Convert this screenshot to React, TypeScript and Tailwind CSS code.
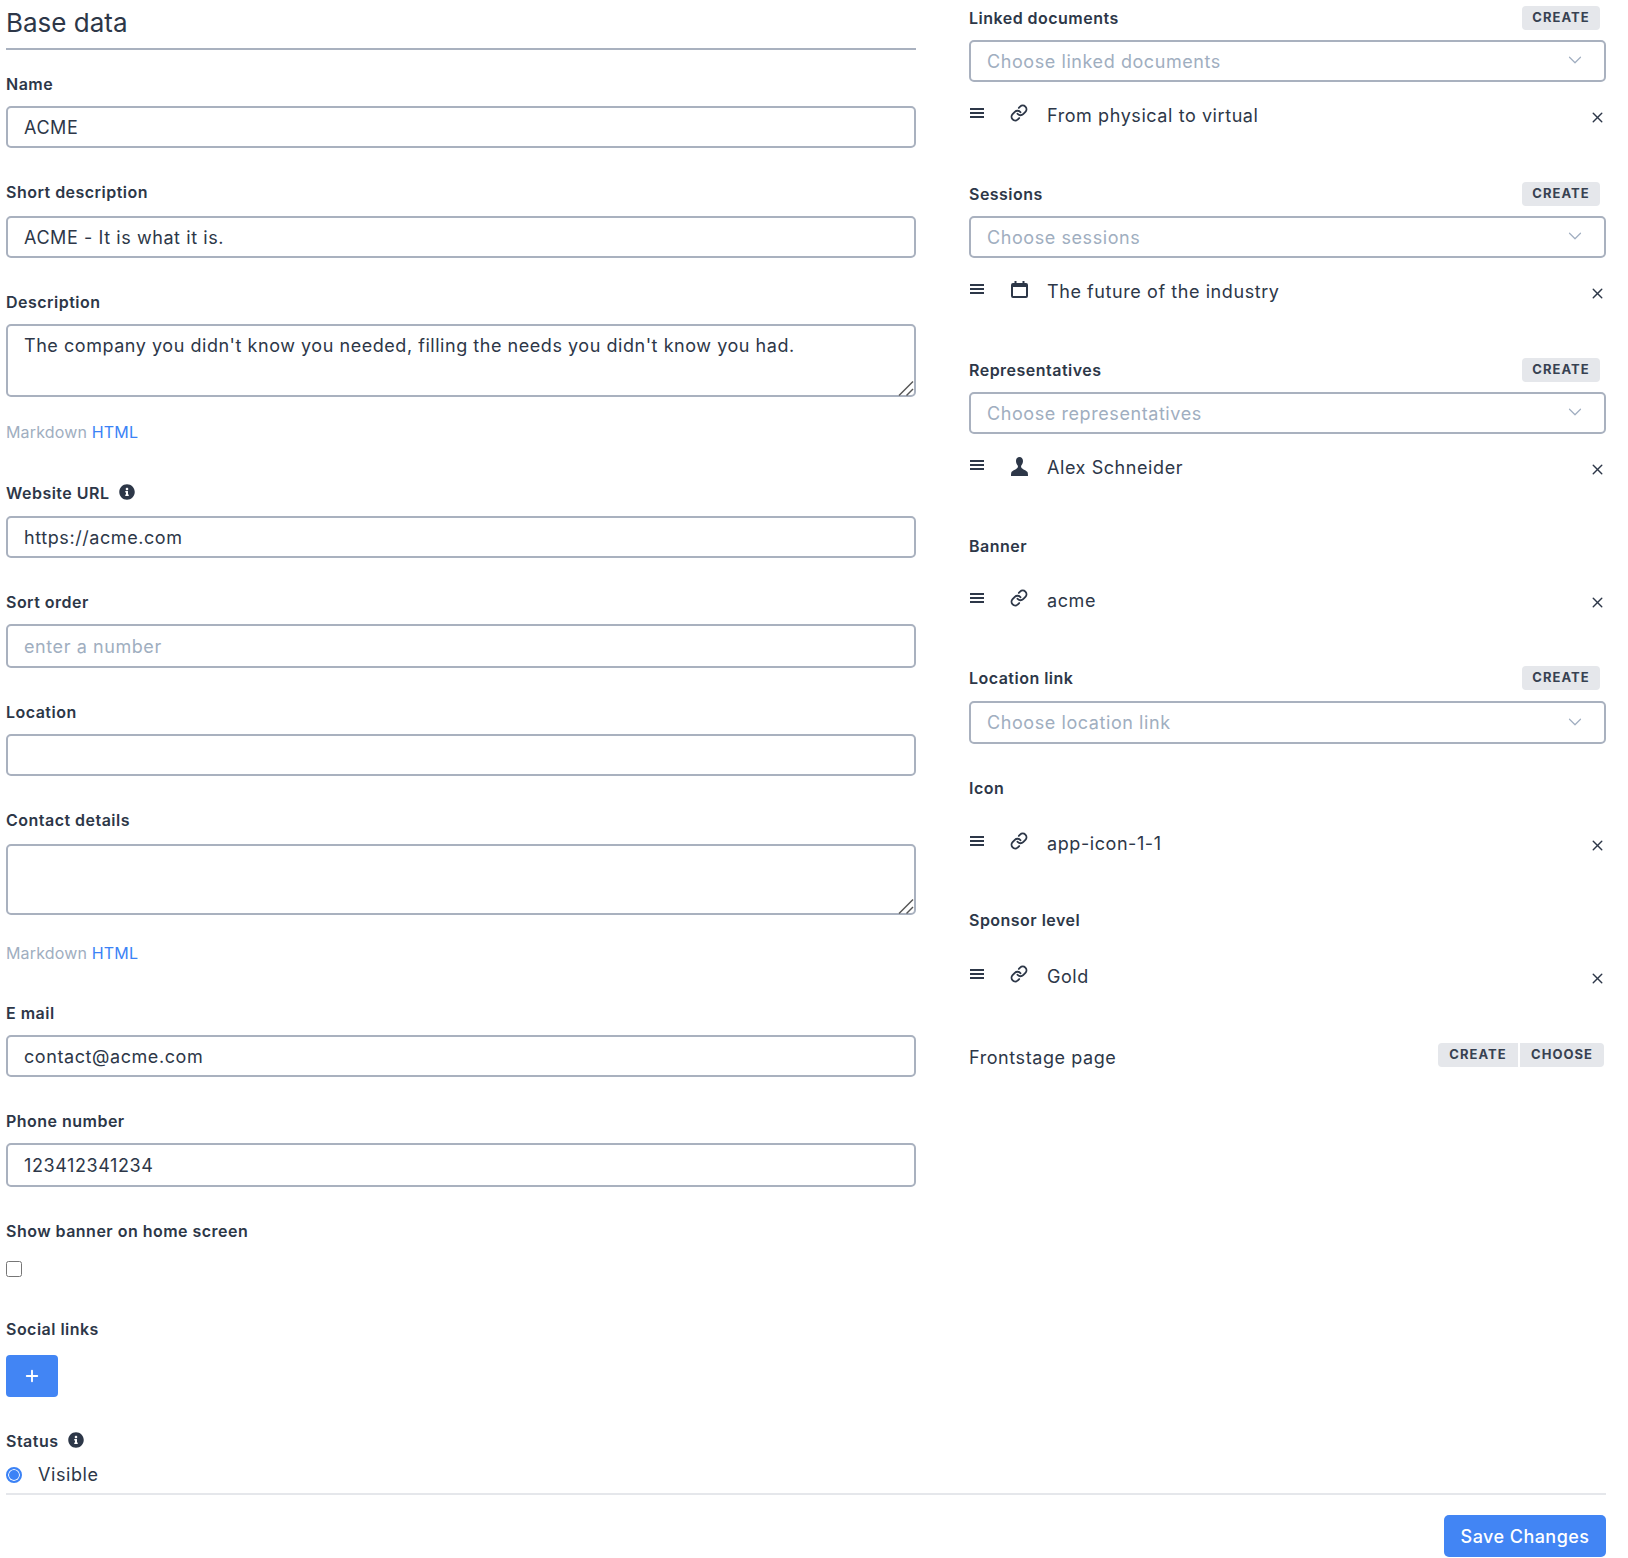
import { ChevronDown, Link as LinkIcon, X, Plus } from "lucide-react";
import { FaInfoCircle } from "react-icons/fa";
import type { ReactNode } from "react";

const inputClass =
  "block w-full h-[42px] rounded-[5px] border-2 border-[#a9b1bf] bg-white px-[16px] text-[18px] tracking-[0.032em] text-[#2d3748] placeholder:text-[#a0aec0] outline-none";

const areaClass =
  "block w-full resize-none rounded-[5px] border-2 border-[#a9b1bf] bg-white px-[16px] py-[6px] text-[18px] leading-[28px] tracking-[0.03em] text-[#2d3748] outline-none";

const Label = ({ children, info }: { children: ReactNode; info?: boolean }) => (
  <div className="flex h-[24px] items-center gap-[10px] text-[16px] font-semibold tracking-[0.03em] text-[#2d3748]">
    <span>{children}</span>
    {info && <FaInfoCircle className="h-[16px] w-[16px] -translate-y-px" />}
  </div>
);

const Field = ({
  label,
  info,
  className,
  children,
}: {
  label: string;
  info?: boolean;
  className?: string;
  children: ReactNode;
}) => (
  <div className={className}>
    <Label info={info}>{label}</Label>
    {children}
  </div>
);

const Area = ({ className, value }: { className: string; value?: string }) => (
  <div className="relative">
    <textarea className={`${areaClass} ${className}`} defaultValue={value} />
    <svg viewBox="0 0 16 16" className="absolute bottom-[1px] right-[2px] h-[16px] w-[16px]" stroke="#555" strokeWidth="1.4" fill="none">
      <path d="M1 15.5 15 1.5" />
      <path d="M8.5 15.5 15 9" />
    </svg>
  </div>
);

const SmallButton = ({ children, className = "rounded-[4px]" }: { children: ReactNode; className?: string }) => (
  <button className={`flex h-[24px] items-center justify-center bg-[#e5e7eb] text-[13px] font-bold tracking-[0.08em] text-[#374151] ${className}`}>
    {children}
  </button>
);

const Markdown = ({ className }: { className: string }) => (
  <div className={`text-[16px] leading-[24px] tracking-[0.01em] text-[#a0aec0] ${className}`}>
    Markdown <span className="text-[#3b82f6]">HTML</span>
  </div>
);

const Burger = () => (
  <svg viewBox="0 0 14 10" className="ml-[1px] h-[10px] w-[14px]" fill="#2d3748">
    <rect y="0" width="14" height="2" />
    <rect y="4" width="14" height="2" />
    <rect y="8" width="14" height="2" />
  </svg>
);

const CalendarIcon = () => (
  <svg viewBox="0 0 17 17" className="ml-[1px] h-[17px] w-[17px]">
    <path
      fillRule="evenodd"
      fill="#2d3748"
      d="M2 2h1.5v-2h2v2h6v-2h2v2H15a2 2 0 0 1 2 2v11a2 2 0 0 1-2 2H2a2 2 0 0 1-2-2V4a2 2 0 0 1 2-2zM2 6v9h13V6z"
    />
  </svg>
);

const UserIcon = () => (
  <svg viewBox="0 0 17 19" className="ml-[1px] h-[19px] w-[17px] translate-y-[1px]" fill="#2d3748">
    <path d="M8.5 0C6.3 0 5 1.7 5 4c0 1.7.7 3.4 1.7 4.4.3.4.3 1.5 0 2.1C5.7 12.4 1 13.5.3 15.5 0 16.5 0 18 0 19h17c0-1-.1-2.5-.3-3.5-.7-2-5.4-3.1-6.4-5-.3-.6-.3-1.7 0-2.1C11.3 7.4 12 5.7 12 4c0-2.3-1.3-4-3.5-4z" />
  </svg>
);

const Row = ({ icon, text, className }: { icon: ReactNode; text: string; className: string }) => (
  <div className={`flex h-[24px] items-center text-[18px] tracking-[0.032em] text-[#2d3748] ${className}`}>
    <span className="flex w-[41px] -translate-y-[2px] items-center">
      <Burger />
    </span>
    <span className="flex w-[37px] -translate-y-[2px] items-center text-[#2d3748]">{icon}</span>
    <span className="flex-1">{text}</span>
    <X className="h-[17px] w-[17px] translate-y-[2px]" strokeWidth={2} />
  </div>
);

const Select = ({ text, className = "" }: { text: string; className?: string }) => (
  <div className={`flex items-center justify-between rounded-[5px] border-2 border-[#a9b1bf] bg-white pl-[16px] pr-[18px] text-[18px] tracking-[0.032em] text-[#a0aec0] ${className}`}>
    <span>{text}</span>
    <ChevronDown className="h-[22px] w-[22px] -translate-y-[1px] text-[#a0aec0]" strokeWidth={1.3} />
  </div>
);

const Header = ({ label, create = true, className = "" }: { label: string; create?: boolean; className?: string }) => (
  <div className={`flex h-[24px] items-center justify-between pr-[6px] ${className}`}>
    <Label>{label}</Label>
    {create && <SmallButton className="w-[78px] rounded-[4px]">CREATE</SmallButton>}
  </div>
);

const link = <LinkIcon className="h-[18px] w-[18px]" strokeWidth={2.5} />;

export default function App() {
  return (
    <div className="h-[1558px] overflow-hidden bg-white pl-[6px] pr-[22px] font-['Inter',sans-serif]">
      <div className="grid grid-cols-[910px_637px] gap-x-[53px]">
        <div>
          <h2 className="mb-[22px] h-[50px] border-b-2 border-[#a9b1bf] text-[26px] leading-[46px] text-[#2d3748]">
            Base data
          </h2>
          <Field label="Name" className="mb-[32px]">
            <input className={`${inputClass} mt-[10px]`} defaultValue="ACME" />
          </Field>
          <Field label="Short description" className="mb-[32px]">
            <input className={`${inputClass} mt-[12px]`} defaultValue="ACME - It is what it is." />
          </Field>
          <Field label="Description">
            <Area
              className="mt-[10px] h-[73px]"
              value="The company you didn't know you needed, filling the needs you didn't know you had."
            />
          </Field>
          <Markdown className="mb-[37px] mt-[23px]" />
          <Field label="Website URL" info className="mb-[32px]">
            <input className={`${inputClass} mt-[11px]`} defaultValue="https://acme.com" />
          </Field>
          <Field label="Sort order" className="mb-[32px]">
            <input className={`${inputClass} mt-[10px] h-[44px]`} placeholder="enter a number" />
          </Field>
          <Field label="Location" className="mb-[32px]">
            <input className={`${inputClass} mt-[10px]`} />
          </Field>
          <Field label="Contact details">
            <Area className="mt-[12px] h-[71px]" />
          </Field>
          <Markdown className="mb-[36px] mt-[26px]" />
          <Field label="E mail" className="mb-[32px]">
            <input className={`${inputClass} mt-[10px]`} defaultValue="contact@acme.com" />
          </Field>
          <Field label="Phone number" className="mb-[32px]">
            <input className={`${inputClass} mt-[10px] h-[44px]`} defaultValue="123412341234" />
          </Field>
          <Field label="Show banner on home screen" className="mb-[40px]">
            <input type="checkbox" className="mt-[18px] block h-[16px] w-[16px]" />
          </Field>
          <Field label="Social links" className="mb-[32px]">
            <button className="mt-[14px] flex h-[42px] w-[52px] items-center justify-center rounded-[4px] bg-[#4285f4] text-white">
              <Plus className="h-[18px] w-[18px]" strokeWidth={2.5} />
            </button>
          </Field>
          <Field label="Status" info>
            <div className="mt-[8px] flex items-center gap-[16px] text-[18px] leading-[28px] tracking-[0.032em] text-[#2d3748]">
              <input
                type="radio"
                readOnly
                checked
                className="h-[16px] w-[16px] appearance-none rounded-full border-2 border-[#3b82f6] bg-[#3b82f6] shadow-[inset_0_0_0_1px_white]"
              />
              Visible
            </div>
          </Field>
        </div>
        <div className="pt-[6px]">
          <Header label="Linked documents" />
          <Select text="Choose linked documents" className="mt-[10px] h-[42px]" />
          <Row icon={link} text="From physical to virtual" className="mb-[55px] mt-[21px]" />
          <Header label="Sessions" />
          <Select text="Choose sessions" className="mt-[10px] h-[42px]" />
          <Row icon={<CalendarIcon />} text="The future of the industry" className="mb-[55px] mt-[21px]" />
          <Header label="Representatives" />
          <Select text="Choose representatives" className="mt-[10px] h-[42px]" />
          <Row icon={<UserIcon />} text="Alex Schneider" className="mb-[55px] mt-[21px]" />
          <Header label="Banner" create={false} />
          <Row icon={link} text="acme" className="mb-[54px] mt-[30px]" />
          <Header label="Location link" />
          <Select text="Choose location link" className="mt-[11px] h-[43px]" />
          <Header label="Icon" create={false} className="mt-[32px]" />
          <Row icon={link} text="app-icon-1-1" className="mb-[53px] mt-[31px]" />
          <Header label="Sponsor level" create={false} />
          <Row icon={link} text="Gold" className="mb-[55px] mt-[32px]" />
          <div className="flex h-[24px] items-start justify-between pr-[2px]">
            <span className="mt-[1px] text-[18px] tracking-[0.032em] text-[#2d3748]">Frontstage page</span>
            <div className="flex gap-[2px]">
              <SmallButton className="w-[80px] rounded-l-[4px]">CREATE</SmallButton>
              <SmallButton className="w-[84px] rounded-r-[4px]">CHOOSE</SmallButton>
            </div>
          </div>
        </div>
      </div>
      <div className="mt-[4px] h-[2px] bg-[#e5e7eb]" />
      <div className="mt-[20px] flex justify-end">
        <button className="h-[42px] w-[162px] rounded-[5px] bg-[#4285f4] text-[18px] font-medium tracking-[0.025em] text-white">
          Save Changes
        </button>
      </div>
    </div>
  );
}
